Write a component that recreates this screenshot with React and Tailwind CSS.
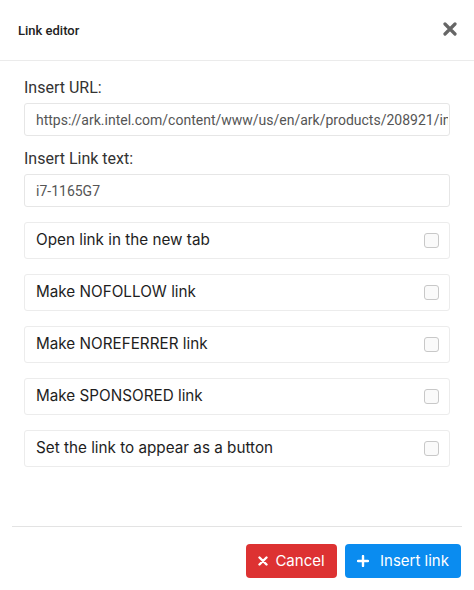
import React, { useState } from "react";

const options = [
  "Open link in the new tab",
  "Make NOFOLLOW link",
  "Make NOREFERRER link",
  "Make SPONSORED link",
  "Set the link to appear as a button",
];

const App = () => {
  const [url, setUrl] = useState(
    "https://ark.intel.com/content/www/us/en/ark/products/208921/intel-core-i7-1165g7-processor-12m-cache-up-to-4-70-ghz-with-ipu.html"
  );
  const [text, setText] = useState("i7-1165G7");
  const [checked, setChecked] = useState({});

  return (
    <div className="w-[474px] h-[590px] bg-white flex flex-col font-['Roboto',sans-serif]">
      {/* header */}
      <div className="h-[61px] shrink-0 flex items-center justify-between pl-[18px] pr-[17px] border-b border-[#ebebeb]">
        <span className="text-[13px] font-medium text-[#222] pt-[1px]">Link editor</span>
        <button className="text-[#666] mt-[-2px]">
          <svg width="14" height="14" viewBox="0 0 14 14">
            <path
              d="M2 2 L12 12 M12 2 L2 12"
              stroke="currentColor"
              strokeWidth="3.2"
              strokeLinecap="round"
            />
          </svg>
        </button>
      </div>

      {/* body */}
      <div className="flex-1 px-6 pt-[16px] flex flex-col">
        <label className="text-[16px] leading-[22px] text-[#333]">Insert URL:</label>
        <input
          value={url}
          onChange={(e) => setUrl(e.target.value)}
          className="mt-[4px] h-[33px] w-full border border-[#e6e6e6] rounded-[3px] pl-[11px] pr-[1px] text-[14px] text-[#555] outline-none font-['Roboto',sans-serif]"
        />
        <label className="mt-[12px] text-[16px] leading-[22px] text-[#333]">Insert Link text:</label>
        <input
          value={text}
          onChange={(e) => setText(e.target.value)}
          className="mt-[4px] h-[33px] w-full border border-[#e6e6e6] rounded-[3px] pl-[11px] pr-[1px] text-[14px] text-[#555] outline-none font-['Roboto',sans-serif]"
        />

        <div className="mt-[15px] flex flex-col gap-[15px]">
          {options.map((opt, i) => (
            <label
              key={opt}
              className="h-[37px] flex items-center justify-between border border-[#ececec] rounded-[3px] pl-[11px] pr-[10px] font-['Inter',sans-serif] text-[15.25px] text-[#1e1e1e] cursor-pointer"
            >
              <span>{opt}</span>
              <input
                type="checkbox"
                checked={!!checked[i]}
                onChange={() => setChecked((prev) => ({ ...prev, [i]: !prev[i] }))}
                className="appearance-none w-[15px] h-[15px] border border-[#c8c8c8] rounded-[3px] bg-[#fafafa] checked:bg-[#0a8cf0]"
              />
            </label>
          ))}
        </div>
      </div>

      {/* footer */}
      <div className="mx-3 border-t border-[#e3e3e3]" />
      <div className="h-[63px] shrink-0 flex items-start justify-end gap-2 pr-[13px] pt-[17px] font-['Inter',sans-serif]">
        <button className="h-[34px] w-[91px] rounded-[4px] bg-[#dd3232] text-white text-[15px] flex items-center justify-center gap-[7px]">
          <svg width="10" height="10" viewBox="0 0 10 10">
            <path d="M1.5 1.5 L8.5 8.5 M8.5 1.5 L1.5 8.5" stroke="white" strokeWidth="2.4" strokeLinecap="round" />
          </svg>
          Cancel
        </button>
        <button className="h-[34px] w-[116px] rounded-[4px] bg-[#0a8cf0] text-white text-[15px] flex items-center justify-center gap-[11px]">
          <svg width="12" height="12" viewBox="0 0 12 12">
            <path d="M6 1 V11 M1 6 H11" stroke="white" strokeWidth="2.4" strokeLinecap="round" />
          </svg>
          Insert link
        </button>
      </div>
    </div>
  );
};

export default App;
